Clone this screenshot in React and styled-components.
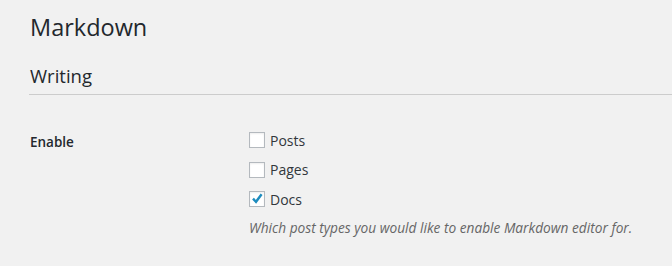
import React from "react";
import styled, { createGlobalStyle } from "styled-components";

const Global = createGlobalStyle`
  html, body { margin: 0; padding: 0; background: #f1f1f1; }
  body { font-family: "Open Sans", "Noto Sans", sans-serif; color: #23282d; }
`;

const Wrap = styled.div`
  padding: 12px 0 0 30px;
`;

const Title = styled.h1`
  margin: 0;
  font-size: 23.5px;
  font-weight: 500;
  line-height: 30px;
  color: #23282d;
`;

const Section = styled.h2`
  margin: 21px 0 0 -1px;
  padding: 0 0 5px 1px;
  font-size: 18.5px;
  font-weight: 500;
  line-height: 26px;
  border-bottom: 1px solid #cccccc;
`;

const FormRow = styled.div`
  display: grid;
  grid-template-columns: 219px 1fr;
  margin-top: 37px;
`;

const Label = styled.div`
  font-size: 13.5px;
  font-weight: 600;
  line-height: 20px;
  color: #23282d;
`;

const Field = styled.div`
  display: flex;
  flex-direction: column;
`;

const Options = styled.div`
  display: flex;
  flex-direction: column;
  gap: 13.5px;
`;

const Option = styled.label`
  display: flex;
  align-items: center;
  gap: 5px;
  height: 16px;
  font-size: 14px;
  color: #32373c;
`;

const Box = styled.span`
  box-sizing: border-box;
  width: 16px;
  height: 16px;
  border: 1px solid #b4b9be;
  background: #fff;
  box-shadow: inset 0 1px 2px rgba(0, 0, 0, 0.07);
  display: flex;
`;

const Description = styled.p`
  margin: 11px 0 0;
  font-size: 13.7px;
  line-height: 20px;
  font-style: italic;
  color: #666;
`;

const Check = () => (
  <svg width="14" height="14" viewBox="0 0 14 14">
    <polyline
      points="3,6.6 6,9.8 11.6,2.2"
      fill="none"
      stroke="#1e8cbe"
      strokeWidth="2.4"
      strokeLinejoin="miter"
    />
  </svg>
);

const types = [
  { name: "Posts", on: false },
  { name: "Pages", on: false },
  { name: "Docs", on: true },
];

export default function App() {
  return (
    <Wrap>
      <Global />
      <Title>Markdown</Title>
      <Section>Writing</Section>
      <FormRow>
        <Label>Enable</Label>
        <Field>
          <Options>
            {types.map((t) => (
              <Option key={t.name}>
                <Box>{t.on && <Check />}</Box>
                {t.name}
              </Option>
            ))}
          </Options>
          <Description>Which post types you would like to enable Markdown editor for.</Description>
        </Field>
      </FormRow>
    </Wrap>
  );
}
